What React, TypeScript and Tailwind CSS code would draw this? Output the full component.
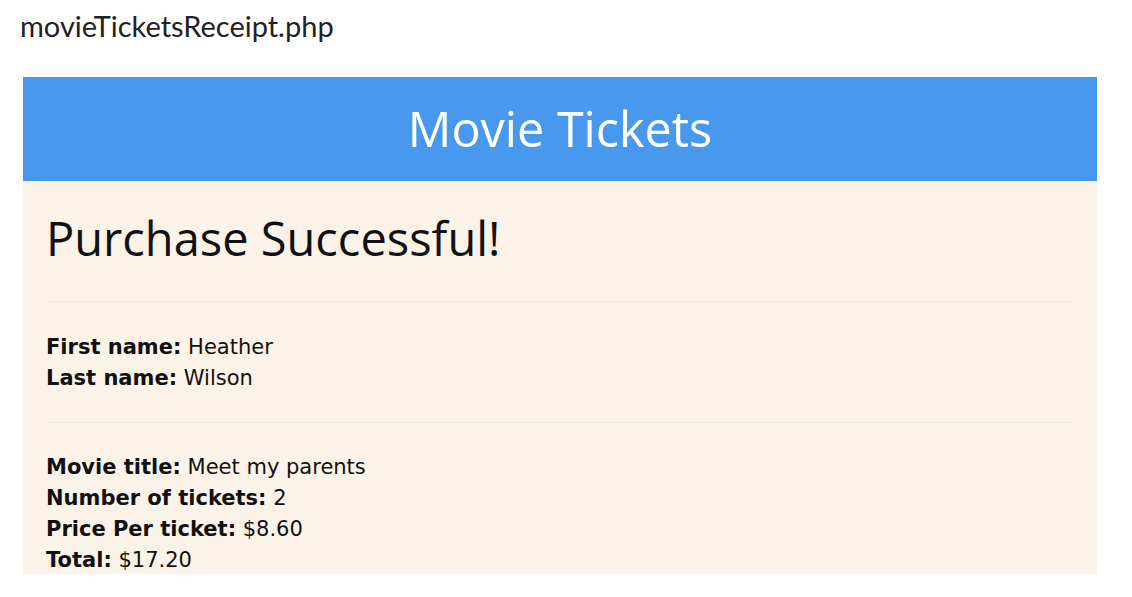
import React from 'react';

const Field: React.FC<{ label: string; value: string }> = ({ label, value }) => (
  <div>
    <span className="font-bold">{label}:</span> {value}
  </div>
);

const App: React.FC = () => {
  return (
    <div className="min-h-screen bg-white">
      <div className="px-5 pt-[6px] text-[29px] leading-[40px] text-[#222] font-['Lato',sans-serif]">
        movieTicketsReceipt.php
      </div>

      <div className="mt-[31px] ml-[23px] w-[1074px] h-[497px] overflow-hidden">
        <header className="h-[104px] bg-[#4899ee] flex items-center justify-center">
          <h1 className="text-white text-[48.5px] leading-none font-['Open_Sans',sans-serif] -mt-[1px]">Movie Tickets</h1>
        </header>

        <main className="bg-[#fbf3e8] h-[393px] px-[23px]">
          <h2 className="pt-[28px] pb-[34px] text-[47px] leading-[58px] text-[#111] font-['Open_Sans',sans-serif]">
            Purchase Successful!
          </h2>
          <hr className="border-0 border-t border-[#f2e9de]" />

          <section className="pt-[30px] pb-[28px] text-[21px] leading-[31px] text-[#111] font-['DejaVu_Sans',sans-serif]">
            <Field label="First name" value="Heather" />
            <Field label="Last name" value="Wilson" />
          </section>
          <hr className="border-0 border-t border-[#f2e9de]" />

          <section className="pt-[29px] text-[21px] leading-[31px] text-[#111] font-['DejaVu_Sans',sans-serif]">
            <Field label="Movie title" value="Meet my parents" />
            <Field label="Number of tickets" value="2" />
            <Field label="Price Per ticket" value="$8.60" />
            <Field label="Total" value="$17.20" />
          </section>
        </main>
      </div>
    </div>
  );
};

export default App;
